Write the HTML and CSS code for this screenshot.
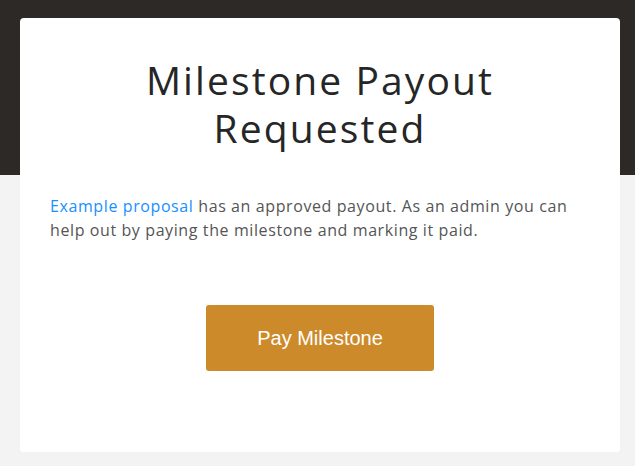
FILE: index.html
```html
<!DOCTYPE html>
<html>
<head>
<meta charset="utf-8">
<link rel="stylesheet" href="styles.css">
</head>
<body>
<div class="page">
  <div class="card">
    <h1 class="title">Milestone Payout Requested</h1>
    <p class="message"><a class="link" href="#">Example proposal</a> has an approved payout. As an admin you can help out by paying the milestone and marking it paid.</p>
    <div class="actions">
      <button class="pay-btn" type="button">Pay Milestone</button>
    </div>
  </div>
</div>
</body>
</html>
```

FILE: styles.css
```css
html, body {
  margin: 0;
  padding: 0;
}
body {
  background: linear-gradient(to bottom, #2d2926 0, #2d2926 175px, #f3f3f3 175px, #f3f3f3 100%);
  min-height: 466px;
  font-family: "Open Sans", "Lato", sans-serif;
}
.page {
  padding: 18px 15px 14px 20px;
}
.card {
  background: #fff;
  border-radius: 4px;
  width: 600px;
  height: 434px;
  box-sizing: border-box;
  padding: 38px 30px 0;
  display: flex;
  flex-direction: column;
}
.title {
  margin: 0 auto;
  width: 400px;
  text-align: center;
  font-weight: 400;
  font-size: 39px;
  line-height: 48px;
  letter-spacing: 2.1px;
  color: #262626;
}
.message {
  margin: 42px 0 0;
  font-size: 16px;
  line-height: 24px;
  letter-spacing: 0.6px;
  color: #555;
}
.link {
  color: #1890ff;
  text-decoration: none;
}
.actions {
  display: flex;
  justify-content: center;
  margin-top: 63px;
}
.pay-btn {
  width: 228px;
  height: 66px;
  background: #cd8a2a;
  border: 0;
  border-radius: 3px;
  color: #fff;
  font-family: "Liberation Sans", Arial, sans-serif;
  font-size: 20px;
}
```
